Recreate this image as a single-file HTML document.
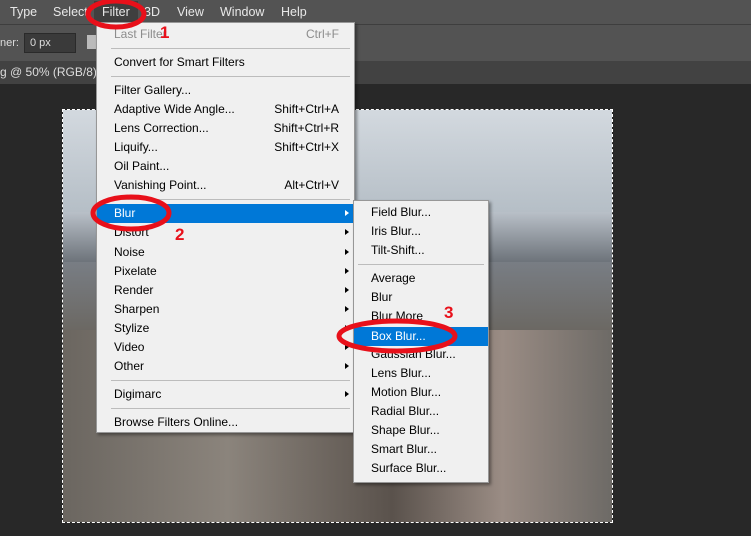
<!DOCTYPE html>
<html><head><style>
body{margin:0;width:751px;height:536px;overflow:hidden;background:#282828;font-family:"Liberation Sans",sans-serif;position:relative}
.a{position:absolute}
.mb{top:0;left:0;width:751px;height:24px;background:#535353;color:#e8e8e8;font-size:12.5px}
.mb span{position:absolute;top:5px}
.ob{top:24px;left:0;width:751px;height:37px;background:#535353;border-top:1px solid #3e3e3e}
.tb{top:61px;left:0;width:751px;height:23px;background:#424242;color:#ddd;font-size:12px}
.img{left:63px;top:110px;width:549px;height:412px;background:linear-gradient(180deg,#d3d9df 0%,#b5bec6 25%,#7a8088 35%,#6a6660 55%,#5d5550 75%,#4a4744 100%);outline:1px dashed #fff}
.menu{background:#f0f0f0;border:1px solid #979797;box-shadow:2px 2px 3px rgba(0,0,0,.4);font-size:12px;color:#000}
.menu div{position:absolute;left:0;right:0;height:19px;line-height:19px}
.menu .t{position:absolute;left:17px}
.menu .k{position:absolute;right:15px}
.menu .s{height:1px;background:#bcbcbc;left:14px;right:4px}
.menu .h{background:#0078d7;color:#fff}
.ar{position:absolute;right:5px;top:6px;width:0;height:0;border-left:4px solid #000;border-top:3.5px solid transparent;border-bottom:3.5px solid transparent}
.h .ar{border-left-color:#fff}
</style></head><body>
<div class="a mb"><span style="left:10px">Type</span><span style="left:53px">Select</span><span style="left:102px">Filter</span><span style="left:144px">3D</span><span style="left:177px">View</span><span style="left:220px">Window</span><span style="left:281px">Help</span></div>
<div class="a" style="left:94px;top:1px;width:44px;height:22px;background:#3f3f3f"></div>
<div class="a" style="left:102px;top:5px;color:#e8e8e8;font-size:12.5px">Filter</div>
<div class="a ob"></div>
<div class="a" style="left:0;top:37px;color:#ddd;font-size:11px">ner:</div>
<div class="a" style="left:24px;top:33px;width:50px;height:18px;background:#3a3a3a;border:1px solid #2a2a2a;color:#ddd;font-size:11px;line-height:18px;text-indent:5px">0 px</div>
<div class="a" style="left:87px;top:35px;width:10px;height:14px;background:#bbb"></div>
<div class="a tb"><span style="position:absolute;left:0;top:4px">g @ 50% (RGB/8)</span></div>
<div class="a img"></div>
<div class="a" style="left:63px;top:330px;width:549px;height:192px;background:linear-gradient(90deg,#6b6660,#8b847c 30%,#5a524c 60%,#9a8c84 80%,#6d6a66)"></div>
<div class="a" style="left:63px;top:212px;width:549px;height:50px;background:linear-gradient(180deg,#b9c0c8,#6d737a)"></div>

<div class="a menu" style="left:96px;top:22px;width:257px;height:409px">
<div style="top:2px;color:#8c8c8c"><span class="t">Last Filter</span><span class="k">Ctrl+F</span></div>
<div class="s" style="top:25px"></div>
<div style="top:30px"><span class="t">Convert for Smart Filters</span></div>
<div class="s" style="top:53px"></div>
<div style="top:58px"><span class="t">Filter Gallery...</span></div>
<div style="top:77px"><span class="t">Adaptive Wide Angle...</span><span class="k">Shift+Ctrl+A</span></div>
<div style="top:96px"><span class="t">Lens Correction...</span><span class="k">Shift+Ctrl+R</span></div>
<div style="top:115px"><span class="t">Liquify...</span><span class="k">Shift+Ctrl+X</span></div>
<div style="top:134px"><span class="t">Oil Paint...</span></div>
<div style="top:153px"><span class="t">Vanishing Point...</span><span class="k">Alt+Ctrl+V</span></div>
<div class="s" style="top:176px"></div>
<div class="h" style="top:181px"><span class="t">Blur</span><i class="ar"></i></div>
<div style="top:200px"><span class="t">Distort</span><i class="ar"></i></div>
<div style="top:220px"><span class="t">Noise</span><i class="ar"></i></div>
<div style="top:239px"><span class="t">Pixelate</span><i class="ar"></i></div>
<div style="top:258px"><span class="t">Render</span><i class="ar"></i></div>
<div style="top:277px"><span class="t">Sharpen</span><i class="ar"></i></div>
<div style="top:296px"><span class="t">Stylize</span><i class="ar"></i></div>
<div style="top:315px"><span class="t">Video</span><i class="ar"></i></div>
<div style="top:334px"><span class="t">Other</span><i class="ar"></i></div>
<div class="s" style="top:357px"></div>
<div style="top:362px"><span class="t">Digimarc</span><i class="ar"></i></div>
<div class="s" style="top:385px"></div>
<div style="top:390px"><span class="t">Browse Filters Online...</span></div>
</div>

<div class="a menu" style="left:353px;top:200px;width:134px;height:281px">
<div style="top:2px"><span class="t">Field Blur...</span></div>
<div style="top:21px"><span class="t">Iris Blur...</span></div>
<div style="top:40px"><span class="t">Tilt-Shift...</span></div>
<div class="s" style="top:63px;left:4px"></div>
<div style="top:68px"><span class="t">Average</span></div>
<div style="top:87px"><span class="t">Blur</span></div>
<div style="top:106px"><span class="t">Blur More</span></div>
<div class="h" style="top:126px"><span class="t">Box Blur...</span></div>
<div style="top:144px"><span class="t">Gaussian Blur...</span></div>
<div style="top:163px"><span class="t">Lens Blur...</span></div>
<div style="top:182px"><span class="t">Motion Blur...</span></div>
<div style="top:201px"><span class="t">Radial Blur...</span></div>
<div style="top:220px"><span class="t">Shape Blur...</span></div>
<div style="top:239px"><span class="t">Smart Blur...</span></div>
<div style="top:258px"><span class="t">Surface Blur...</span></div>
</div>

<svg class="a" style="left:0;top:0" width="751" height="536">
<g fill="none" stroke="#e8101a" stroke-width="5">
<ellipse cx="116" cy="14" rx="28" ry="13"/>
<ellipse cx="131" cy="213" rx="38" ry="16"/>
<ellipse cx="397" cy="336" rx="58" ry="15"/>
</g>
<g fill="#e8101a" font-family="Liberation Sans,sans-serif" font-weight="bold" font-size="17">
<text x="160" y="38">1</text><text x="175" y="240">2</text><text x="444" y="318">3</text>
</g>
</svg>
</body></html>
